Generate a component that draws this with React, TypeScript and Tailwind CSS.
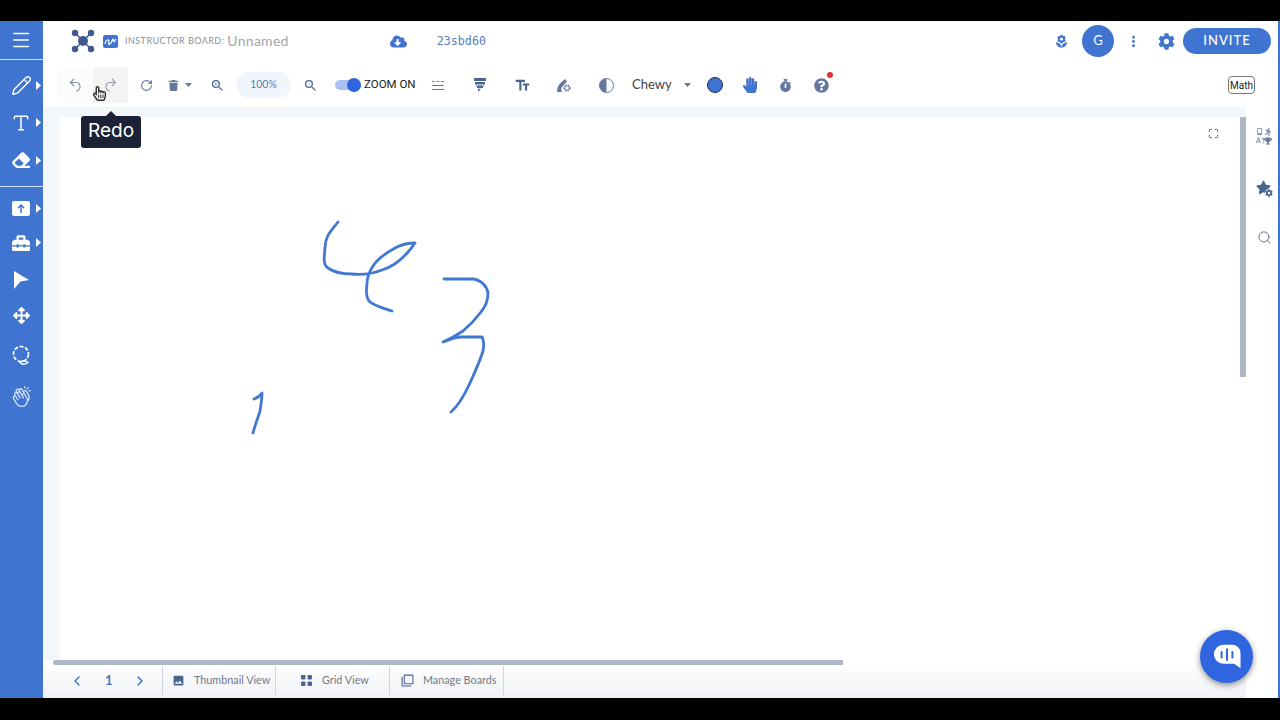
import React from 'react'
import { Menu, Pencil, Type, RotateCw, Search, Maximize, ChevronLeft, ChevronRight } from 'lucide-react'
import { FaEraser, FaToolbox, FaArrowsAlt, FaTrash, FaCloudDownloadAlt, FaHandPaper, FaStopwatch, FaQuestionCircle, FaCog, FaRegHandPointer, FaStar, FaMobileAlt, FaRunning, FaTrophy } from 'react-icons/fa'
import { PiHandsClapping } from 'react-icons/pi'
import { MdZoomIn, MdZoomOut, MdTextFields, MdLocalFlorist, MdMoreVert, MdImage, MdFilterNone } from 'react-icons/md'

const blue = 'text-[#3f74d1]'
const slate = 'text-[#64779f]'

const Caret = ({ className = '' }: { className?: string }) => (
    <svg width="7" height="4" viewBox="0 0 7 4" className={className}>
        <path d="M0 0h7L3.5 4z" fill="currentColor" />
    </svg>
)

const SideArrow = () => (
    <svg width="5" height="9" viewBox="0 0 5 9" className="absolute left-[36px] text-white">
        <path d="M0 0l5 4.5L0 9z" fill="currentColor" />
    </svg>
)

const Logo = () => (
    <svg width="24" height="24" viewBox="0 0 24 24" className="text-[#3f5a8c]">
        <path d="M4 4l16 16M20 4L4 20" stroke="currentColor" strokeWidth="1.500" />
        <circle cx="12" cy="12" r="5" fill="currentColor" />
        <circle cx="4" cy="4" r="3.200" fill="currentColor" />
        <circle cx="20" cy="4" r="3.200" fill="currentColor" />
        <circle cx="4" cy="20" r="3.200" fill="currentColor" />
        <circle cx="20" cy="20" r="3.200" fill="currentColor" />
    </svg>
)

const BoardMark = () => (
    <svg width="15" height="13" viewBox="0 0 15 13">
        <rect width="15" height="13" rx="2" fill="#3f74d1" />
        <path d="M2 9c1-5 4-5 4-2s-1 3 1 2 2-5 3-5 0 3 1 3 1-2 2-3" stroke="#fff" strokeWidth="1.200" fill="none" />
    </svg>
)

const UndoIcon = ({ className = '', flip = false }: { className?: string; flip?: boolean }) => (
    <svg width="12" height="14" viewBox="0 0 12 14" fill="none" stroke="currentColor" strokeWidth="1.200" className={`${flip ? '-scale-x-100' : ''} ${className}`}>
        <path d="M5 1L1.500 4.500 5 8M2 4.500H7C10 4.500 11 7 11 9 11 11 9.500 13 7 13" />
    </svg>
)

const SidebarItems = [
    { h: 'h-[38px]', icon: <Pencil size={21} strokeWidth={1.6} />, arrow: true },
    { h: 'h-[37px]', icon: <Type size={20} strokeWidth={1.8} />, arrow: true },
    { h: 'h-[38px]', icon: <FaEraser size={18} />, arrow: true },
]

const ToolCell = ({ className = '', children }: { className?: string; children: React.ReactNode }) => (
    <div className={`flex items-center justify-center shrink-0 ${className}`}>{children}</div>
)

const LinesIcon = () => (
    <svg width="12" height="11" viewBox="0 0 12 11" className={slate}>
        <path d="M0 1.500h2.600M4.700 1.500h2.600M9.400 1.500H12" stroke="currentColor" strokeWidth="1" />
        <path d="M0 5.500h12M0 9.500h12" stroke="currentColor" strokeWidth="1" />
    </svg>
)

const MarkerIcon = () => (
    <svg width="12" height="14" viewBox="0 0 12 14" className="text-[#4a6590]">
        <path d="M0 0h12v3H0zM1 4h10v2.500H1zM2 7.500h8L8.500 10H3.500zM4 10.800l3 0L4 14z" fill="currentColor" />
    </svg>
)

const PenGearIcon = () => (
    <svg width="14" height="14" viewBox="0 0 14 14" className={slate}>
        <path d="M0 14c0-4 1.500-7 3-8.500L8 1l2 2.500L6 8a5 5 0 0 0-1 6z" fill="currentColor" />
        <circle cx="10" cy="10" r="2.600" fill="none" stroke="currentColor" strokeWidth="1.800" strokeDasharray="1.600 .5" />
    </svg>
)

const ContrastIcon = () => (
    <svg width="15" height="15" viewBox="0 0 15 15" className={slate}>
        <circle cx="7.500" cy="7.500" r="7" fill="none" stroke="currentColor" strokeWidth="1" />
        <path d="M7.500.5a7 7 0 0 0 0 14z" fill="currentColor" />
    </svg>
)

const GridIcon = () => (
    <svg width="11" height="11" viewBox="0 0 11 11" className="text-[#4a6590]">
        <rect width="4.500" height="4.500" rx="1" fill="currentColor" />
        <rect x="6.500" width="4.500" height="4.500" rx="1" fill="currentColor" />
        <rect y="6.500" width="4.500" height="4.500" rx="1" fill="currentColor" />
        <rect x="6.500" y="6.500" width="4.500" height="4.500" rx="1" fill="currentColor" />
    </svg>
)

const UploadBox = () => (
    <svg width="18" height="15" viewBox="0 0 18 15">
        <rect width="18" height="15" rx="2" fill="#fff" />
        <path d="M9 12V4M6 7l3-3 3 3" stroke="#3f74d1" strokeWidth="1.500" fill="none" />
    </svg>
)

const PointerIcon = () => (
    <svg width="16" height="18" viewBox="0 0 16 18">
        <path d="M1 0l15 9-8.500 1.500L1 18z" fill="#fff" />
    </svg>
)

const LassoIcon = () => (
    <svg width="20" height="20" viewBox="0 0 20 20">
        <circle cx="10" cy="9" r="7.500" fill="none" stroke="#fff" strokeWidth="1.700" strokeDasharray="4 1.600" />
        <path d="M9 17.500c2-2.500 5-2.500 8 0-3 2.200-6 2.200-8 0z" fill="none" stroke="#fff" strokeWidth="1.500" />
    </svg>
)

const Scribble = () => (
    <svg width="300" height="240" viewBox="230 210 300 240" className="absolute left-[230px] top-[189px] text-[#4178d2]" fill="none" stroke="currentColor" strokeWidth="2.800" strokeLinecap="round" strokeLinejoin="round">
        <path d="M338 222C331 231 325 236 325 248C324 258 323 265 328 268C335 273 343 274 352 274C362 275 372 274 382 270C392 267 402 259 408 252C411 249 413 246 415 243C408 243 402 244 395 248C386 253 378 258 373 266C369 272 367 277 367 284C366 291 366 297 369 301C374 306 383 308 392 311" />
        <path d="M444 279H473C481 280 487 286 488 293C488 300 486 306 481 312C475 320 469 326 463 331C457 335 450 339 443 342C449 340 455 337 461 337H482C484 341 484 346 483 351C480 361 475 372 470 383C465 394 459 405 451 412" />
        <path d="M254 399C257 398 260 396 262 393C262 399 261 405 260 411C258 418 255 425 253 433" />
    </svg>
)

export default function App() {
    return (
        <div className="w-[1280px] h-[720px] bg-black overflow-hidden pt-[21px] font-['Lato','Noto_Sans',sans-serif]">
            <div className="relative h-[677px] flex bg-white">
                {/* left tools */}
                <aside className="w-[43px] shrink-0 bg-[#3f74d1] text-white flex flex-col items-center">
                    <div className="w-full h-[39px] border-b border-[#cfe0f7] flex items-center justify-center pr-[1px]">
                        <Menu size={22} strokeWidth={1.6} />
                    </div>
                    <div className="h-[6px]" />
                    {SidebarItems.map((item, i) => (
                        <div key={i} className={`relative w-full flex items-center justify-center pr-[1px] ${item.h}`}>
                            {item.icon}
                            {item.arrow && <SideArrow />}
                        </div>
                    ))}
                    <div className="w-full mt-[7px] border-b border-[#cfe0f7]" />
                    <div className="h-[4px]" />
                    <div className="relative w-full h-[35px] flex items-center justify-center pr-[1px]"><UploadBox /><SideArrow /></div>
                    <div className="relative w-full h-[33px] flex items-center justify-center pr-[1px]"><FaToolbox size={18} /><SideArrow /></div>
                    <div className="w-full h-[41px] flex items-center justify-center pr-[1px]"><PointerIcon /></div>
                    <div className="w-full h-[31px] flex items-center justify-center pr-[1px]"><FaArrowsAlt size={17} /></div>
                    <div className="w-full h-[47px] flex items-center justify-center pr-[1px]"><LassoIcon /></div>
                    <div className="w-full h-[36px] flex items-center justify-center pr-[1px]"><PiHandsClapping size={21} className="text-[#cfe0f7]" /></div>
                </aside>

                <div className="flex-1 min-w-0 flex flex-col pr-[2px] bg-[#3f74d1]">
                    <div className="flex-1 min-h-0 flex flex-col bg-white">
                        {/* header */}
                        <header className="h-[40px] shrink-0 flex items-center">
                            <div className="ml-[28px]"><Logo /></div>
                            <div className="ml-[8px]"><BoardMark /></div>
                            <span className="ml-[7px] text-[9px] tracking-[0.05em] text-[#8a8f99]">INSTRUCTOR BOARD:</span>
                            <span className="ml-[3px] -mt-[2px] text-[14px] text-[#a3a6ac] tracking-[0.02em]">Unnamed</span>
                            <FaCloudDownloadAlt size={17} className={`ml-[101px] ${blue}`} />
                            <span className="ml-[30px] mt-[1px] font-['DejaVu_Sans_Mono',monospace] text-[11.700px] text-[#5b7fb5]">23sbd60</span>
                            <div className="ml-auto flex items-center pr-[7px]">
                                <MdLocalFlorist size={15} className={blue} />
                                <div className="ml-[13px] w-[32px] h-[32px] rounded-full bg-[#3f74d1] text-white text-[13px] flex items-center justify-center">G</div>
                                <MdMoreVert size={17} className={`ml-[11px] ${blue}`} />
                                <FaCog size={17} className={`ml-[16px] ${blue}`} />
                                <div className="ml-[8px] w-[88px] h-[26px] rounded-full bg-[#3f74d1] text-white text-[13px] font-medium tracking-[0.08em] flex items-center justify-center">INVITE</div>
                            </div>
                        </header>

                        {/* toolbar */}
                        <div className="h-[44px] mt-[2px] shrink-0 flex items-center pl-[14px] text-[#4a6590]">
                            <ToolCell className="w-[36px] h-[36px] bg-[#fcfcfc]"><UndoIcon className="text-[#8a93a6]" /></ToolCell>
                            <ToolCell className="w-[35px] h-[36px] bg-[#f3f3f2]"><UndoIcon flip className="text-[#9aa3b5]" /></ToolCell>
                            <ToolCell className="w-[36px]"><RotateCw size={13} className={slate} /></ToolCell>
                            <ToolCell className="w-[35px] gap-[6px] pr-[4px]"><FaTrash size={11} className={slate} /><Caret className={slate} /></ToolCell>
                            <ToolCell className="w-[36px]"><MdZoomIn size={15} className="text-[#4a6590]" /></ToolCell>
                            <div className="ml-[1px] w-[55px] h-[26px] rounded-full bg-[#f0f6fc] text-[#5b7fb5] text-[10.500px] flex items-center justify-center">100%</div>
                            <ToolCell className="w-[38px]"><MdZoomOut size={15} className="text-[#4a6590]" /></ToolCell>
                            <div className="ml-[6px] relative w-[26px] h-[10px] rounded-full bg-[#a9c1f5]">
                                <div className="absolute right-0 -top-[2px] w-[14px] h-[14px] rounded-full bg-[#2f66e0]" />
                            </div>
                            <span className="ml-[3px] w-[53px] font-['Roboto',sans-serif] text-[11.500px] text-[#222] whitespace-nowrap">ZOOM ON</span>
                            <ToolCell className="w-[42px]"><LinesIcon /></ToolCell>
                            <ToolCell className="w-[42px]"><MarkerIcon /></ToolCell>
                            <ToolCell className="w-[42px]"><MdTextFields size={17} className="text-[#4a6590]" /></ToolCell>
                            <ToolCell className="w-[42px]"><PenGearIcon /></ToolCell>
                            <ToolCell className="w-[42px]"><ContrastIcon /></ToolCell>
                            <span className="ml-[5px] w-[52px] text-[13px] text-[#444]">Chewy</span>
                            <Caret className={slate} />
                            <div className="ml-[16px] w-[16px] h-[16px] rounded-full bg-[#3f74d1] border border-[#1d2c4d]" />
                            <ToolCell className="w-[54px]"><FaHandPaper size={16} className={blue} /></ToolCell>
                            <ToolCell className="w-[17px]"><FaStopwatch size={13} className={slate} /></ToolCell>
                            <ToolCell className="w-[54px] h-[44px] relative">
                                <FaQuestionCircle size={15} className={slate} />
                                <span className="absolute left-[33px] top-[9px] w-[6px] h-[6px] rounded-full bg-[#e0323c]" />
                            </ToolCell>
                            <div className="ml-auto mr-[23px] w-[27px] h-[18px] rounded-[4px] border border-[#777] font-['Roboto',sans-serif] text-[10px] text-[#222] flex items-center justify-center">Math</div>
                        </div>

                        {/* canvas + right rail */}
                        <div className="flex-1 min-h-0 flex">
                            <div className="relative flex-1 min-w-0 flex flex-col bg-[#f2f7fc]">
                                <div className="flex-1 min-h-0 mt-[10px] ml-[17px] flex">
                                    <div className="flex-1 bg-white relative">
                                        <Maximize size={11} className="absolute right-[21px] top-[11px] text-[#4a5a78]" strokeWidth={2} />
                                    </div>
                                    <div className="w-[6px] bg-white">
                                        <div className="h-[260px] bg-[#aeb7c6]" />
                                    </div>
                                </div>
                                <div className="h-[5px] shrink-0 bg-white pl-[10px]">
                                    <div className="w-[790px] h-full rounded-l-full bg-[#aeb7c6]" />
                                </div>
                                {/* bottom bar */}
                                <div className="h-[33px] shrink-0 flex items-center pb-[2px] bg-gradient-to-b from-white to-[#eff0f4] text-[10.800px] text-[#6f7a8c]">
                                    <ChevronLeft size={16} strokeWidth={2.200} className={`ml-[26px] ${blue}`} />
                                    <span className={`ml-[20px] w-[6px] text-[13px] font-bold ${blue}`}>1</span>
                                    <ChevronRight size={16} strokeWidth={2.200} className={`ml-[21px] ${blue}`} />
                                    <div className="ml-[14px] h-[30px] w-[114px] border-x border-[#d4d6db] flex items-center pl-[9px] gap-[9px]">
                                        <MdImage size={13} className="text-[#4a6590]" />
                                        <span>Thumbnail View</span>
                                    </div>
                                    <div className="h-[30px] w-[114px] border-r border-[#d4d6db] flex items-center pl-[25px] gap-[10px]">
                                        <GridIcon />
                                        <span>Grid View</span>
                                    </div>
                                    <div className="h-[30px] w-[114px] border-r border-[#d4d6db] flex items-center pl-[11px] gap-[9px]">
                                        <MdFilterNone size={13} className="text-[#4a6590]" />
                                        <span>Manage Boards</span>
                                    </div>
                                </div>
                            </div>
                            <div className="w-[32px] shrink-0 flex flex-col items-center pl-[4px] pt-[21px] text-[#4a6590]">
                                <div className="grid grid-cols-2 w-[16px] h-[17px] text-[7px] leading-none text-[#64779f]">
                                    <FaMobileAlt size={7} />
                                    <FaRunning size={8} />
                                    <span>A↑</span>
                                    <FaTrophy size={8} />
                                </div>
                                <div className="relative mt-[35px] w-[17px] h-[17px]">
                                    <FaStar size={15} />
                                    <FaCog size={8} className="absolute right-0 bottom-0 bg-white rounded-full" />
                                </div>
                                <Search size={15} strokeWidth={1.500} className="mt-[33px] text-[#5e6b80]" />
                            </div>
                        </div>
                    </div>
                </div>

                <Scribble />

                {/* tooltip + cursor */}
                <div className="absolute left-[81px] top-[95px] w-[60px] h-[32px] pb-[2px] rounded-[3px] bg-[#1b2236] text-white text-[19px] font-['Inter',sans-serif] flex items-center justify-center">
                    <span className="absolute -top-[5px] left-[25px] w-0 h-0 border-x-[5px] border-x-transparent border-b-[5px] border-b-[#1b2236]" />
                    Redo
                </div>
                <FaRegHandPointer size={15} className="absolute left-[92px] top-[65px] text-[#333]" />

                {/* chat */}
                <div className="absolute left-[1200px] top-[609px] w-[53px] h-[53px] rounded-full bg-[#2f66e0] shadow-[0_2px_6px_rgba(0,0,0,0.45)] flex items-center justify-center">
                    <svg width="30" height="27" viewBox="0 0 32 30">
                        <path d="M12 2h10a9 9 0 0 1 9 9v17l-7-5H12a10.500 10.500 0 0 1 0-21z" fill="#fff" />
                        <path d="M10 10v6M16 7v12M22 10v6" stroke="#2f66e0" strokeWidth="2.200" strokeLinecap="round" />
                    </svg>
                </div>
            </div>
        </div>
    )
}
